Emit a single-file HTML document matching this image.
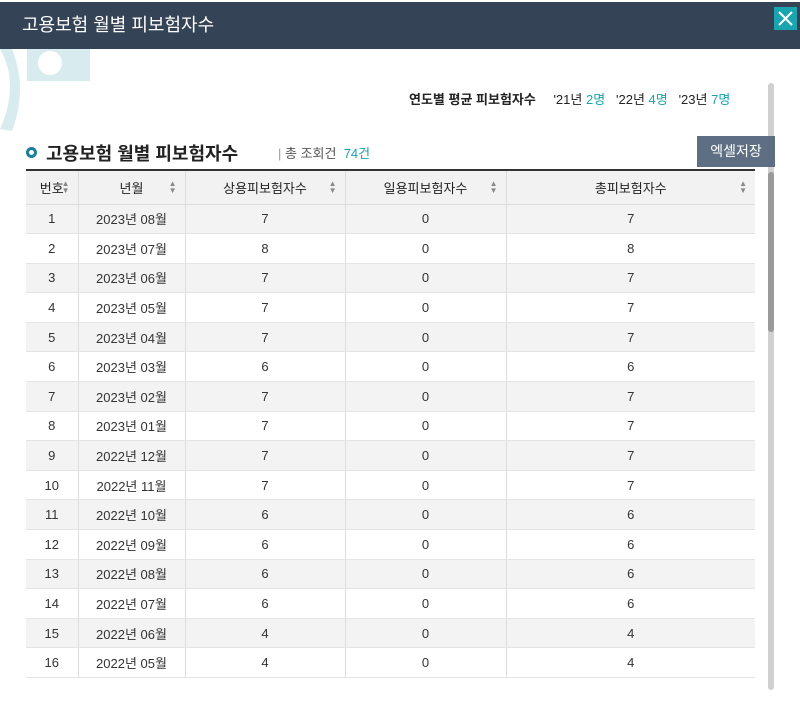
<!DOCTYPE html>
<html><head><meta charset="utf-8"><style>
*{margin:0;padding:0;box-sizing:border-box}
body{width:800px;height:720px;background:#fff;font-family:"Liberation Sans","Noto Sans CJK KR",sans-serif;position:relative;overflow:hidden;color:#333}
.hd{position:absolute;left:0;top:2px;width:800px;height:47px;background:#344456;color:#fff;font-size:18px;line-height:47px;padding-left:22px}
.x{position:absolute;left:774px;top:7px;width:23px;height:23px;background:#1aa4b0}
.deco{position:absolute;left:0;top:49px;width:90px;height:82px;overflow:hidden}
.avg{position:absolute;left:409px;top:89px;font-size:13px;color:#222}
.avg b{font-weight:bold;margin-right:14px}
.c{color:#1aa4b0}
.ttl{position:absolute;left:26px;top:140px;font-size:18px;font-weight:bold;color:#222}
.dot{position:absolute;left:26px;top:147px;width:11px;height:11px;border:3px solid #1d7f9c;border-radius:50%}
.cnt{position:absolute;left:278px;top:143px;font-size:13px;color:#555}
.btn{position:absolute;left:697px;top:136px;width:78px;height:31px;background:#5a6b80;color:#fff;font-size:14px;line-height:31px;text-align:center;opacity:.97}
.track{position:absolute;left:768px;top:83px;width:6px;height:607px;background:#d0d0d0;border-radius:3px}
.thumb{position:absolute;left:768px;top:172px;width:6px;height:160px;background:#9a9a9a;border-radius:3px}
table{position:absolute;left:26px;top:169px;width:729px;border-collapse:collapse;font-size:13px;border-top:2px solid #333}
th{height:34px;background:#f2f2f2;font-weight:normal;color:#222;border-right:1px solid #ddd;border-bottom:1px solid #ddd;position:relative}
th:last-child,td:last-child{border-right:none}
th span{position:absolute;right:8px;top:9px;font-size:8px;color:#888;line-height:7px}
td{height:29.6px;text-align:center;border-right:1px solid #ddd;border-bottom:1px solid #e4e4e4;color:#333}
tr:nth-child(even) td{background:#f3f3f3}
</style></head><body>
<div class="hd">고용보험 월별 피보험자수</div>
<div class="x"><svg width="23" height="23"><path d="M5 5L18 18M18 5L5 18" stroke="#fff" stroke-width="2"/></svg></div>
<div class="deco"><svg width="90" height="82"><rect x="27" y="0" width="63" height="32" fill="#d8ecef"/><circle cx="50" cy="14" r="12" fill="#fff"/><path d="M0 0 Q20 35 0 80 L12 82 Q28 40 12 0Z" fill="#d8ecef"/></svg></div>
<div class="avg"><b>연도별 평균 피보험자수</b> '21년 <span class="c">2명</span>&nbsp;&nbsp; '22년 <span class="c">4명</span>&nbsp;&nbsp; '23년 <span class="c">7명</span></div>
<div class="dot"></div>
<div class="ttl" style="left:46px">고용보험 월별 피보험자수</div>
<div class="cnt"><span style="color:#999">|</span> 총 조회건 &nbsp;<span class="c">74건</span></div>
<div class="track"></div><div class="thumb"></div>
<table>
<colgroup><col style="width:52px"><col style="width:107px"><col style="width:160px"><col style="width:161px"><col></colgroup>
<tr><th>번호<span>▲<br>▼</span></th><th>년월<span>▲<br>▼</span></th><th>상용피보험자수<span>▲<br>▼</span></th><th>일용피보험자수<span>▲<br>▼</span></th><th>총피보험자수<span>▲<br>▼</span></th></tr>
<tr><td>1</td><td>2023년 08월</td><td>7</td><td>0</td><td>7</td></tr>
<tr><td>2</td><td>2023년 07월</td><td>8</td><td>0</td><td>8</td></tr>
<tr><td>3</td><td>2023년 06월</td><td>7</td><td>0</td><td>7</td></tr>
<tr><td>4</td><td>2023년 05월</td><td>7</td><td>0</td><td>7</td></tr>
<tr><td>5</td><td>2023년 04월</td><td>7</td><td>0</td><td>7</td></tr>
<tr><td>6</td><td>2023년 03월</td><td>6</td><td>0</td><td>6</td></tr>
<tr><td>7</td><td>2023년 02월</td><td>7</td><td>0</td><td>7</td></tr>
<tr><td>8</td><td>2023년 01월</td><td>7</td><td>0</td><td>7</td></tr>
<tr><td>9</td><td>2022년 12월</td><td>7</td><td>0</td><td>7</td></tr>
<tr><td>10</td><td>2022년 11월</td><td>7</td><td>0</td><td>7</td></tr>
<tr><td>11</td><td>2022년 10월</td><td>6</td><td>0</td><td>6</td></tr>
<tr><td>12</td><td>2022년 09월</td><td>6</td><td>0</td><td>6</td></tr>
<tr><td>13</td><td>2022년 08월</td><td>6</td><td>0</td><td>6</td></tr>
<tr><td>14</td><td>2022년 07월</td><td>6</td><td>0</td><td>6</td></tr>
<tr><td>15</td><td>2022년 06월</td><td>4</td><td>0</td><td>4</td></tr>
<tr><td>16</td><td>2022년 05월</td><td>4</td><td>0</td><td>4</td></tr>
</table>
<div class="btn">엑셀저장</div>
</body></html>
